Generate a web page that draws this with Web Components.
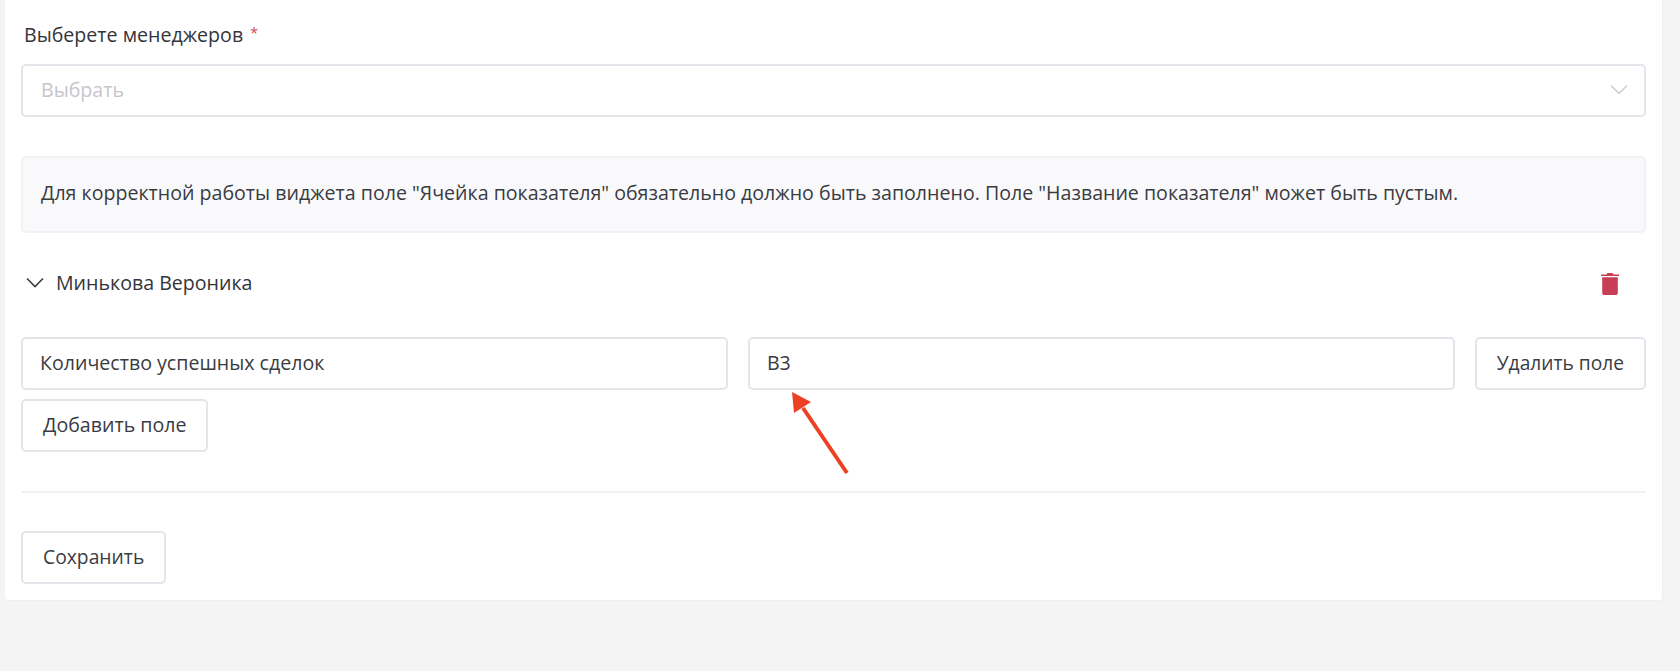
<!DOCTYPE html>
<html lang="ru">
<head>
<meta charset="utf-8">
<title>Виджет</title>
<style>
    html, body { margin: 0; height: 100%; }
    body {
        background-color: #f4f4f5;
        color: #3a3c42;
        font-family: "Open Sans", "Noto Sans", sans-serif;
        font-size: 19.6px;
        overflow: hidden;
    }
</style>
</head>
<body>
<settings-card>
    <form-label>Выберете менеджеров</form-label>
    <select-box placeholder="Выбрать"></select-box>
    <info-note>Для корректной работы виджета поле "Ячейка показателя" обязательно должно быть заполнено. Поле "Название показателя" может быть пустым.</info-note>
    <manager-row>Минькова Вероника</manager-row>
    <field-row first="Количество успешных сделок" second="B3"></field-row>
    <plain-button class="add">Добавить поле</plain-button>
    <card-divider></card-divider>
    <plain-button style="font-size: 19.3px">Сохранить</plain-button>
    <red-arrow></red-arrow>
</settings-card>

<script>
const BORDER = '#e4e4ea';

class SettingsCard extends HTMLElement {
    constructor() {
        super();
        this.attachShadow({ mode: 'open' }).innerHTML = `
            <style>
                :host {
                    display: block;
                    position: relative;
                    box-sizing: border-box;
                    width: 1658px;
                    margin-left: 5px;
                    height: 601px;
                    padding: 20px 16px 0;
                    background: #fff;
                    border-bottom: 1px solid #eeeef1;
                    border-right: 1px solid #eeeef1;
                    border-radius: 0 0 4px 4px;
                }
            </style>
            <slot></slot>
        `;
    }
}

class FormLabel extends HTMLElement {
    constructor() {
        super();
        this.attachShadow({ mode: 'open' }).innerHTML = `
            <style>
                :host { display: block; height: 44px; line-height: 30px; padding-left: 3px; box-sizing: border-box; color: #33353a; }
                span { color: #d0455c; font-size: 14px; position: relative; top: -4px; margin-left: 2px; }
            </style>
            <slot></slot> <span>*</span>
        `;
    }
}

class SelectBox extends HTMLElement {
    constructor() {
        super();
        this.attachShadow({ mode: 'open' }).innerHTML = `
            <style>
                :host {
                    display: flex;
                    align-items: center;
                    justify-content: space-between;
                    box-sizing: border-box;
                    height: 53px;
                    margin-bottom: 39px;
                    padding: 0 16px 2px 18px;
                    border: 2px solid ${BORDER};
                    border-radius: 5px;
                    color: #c6c7cb;
                }
                svg { display: block; }
            </style>
            <span>${this.getAttribute('placeholder')}</span>
            <svg width="18" height="11" viewBox="0 0 18 11"><path d="M1 1.5 9 9.5 17 1.5" fill="none" stroke="#cbccd0" stroke-width="1.5"/></svg>
        `;
    }
}

class InfoNote extends HTMLElement {
    constructor() {
        super();
        this.attachShadow({ mode: 'open' }).innerHTML = `
            <style>
                :host {
                    display: flex;
                    align-items: center;
                    box-sizing: border-box;
                    height: 77px;
                    padding: 0 18px 5px;
                    background: #f9f9fb;
                    border: 2px solid #f2f2f5;
                    border-radius: 5px;
                    color: #3a3c42;
                    white-space: nowrap;
                }
            </style>
            <slot></slot>
        `;
    }
}

class ManagerRow extends HTMLElement {
    constructor() {
        super();
        this.attachShadow({ mode: 'open' }).innerHTML = `
            <style>
                :host {
                    display: flex;
                    align-items: center;
                    box-sizing: border-box;
                    height: 104px;
                    padding: 0 27px 6px 5px;
                    color: #33353a;
                }
                .chev { margin-right: 12px; display: block; }
                .name { flex: 1; }
                .trash { display: block; margin-top: 4px; }
            </style>
            <svg class="chev" width="18" height="11" viewBox="0 0 18 11"><path d="M1 1.5 9 9.5 17 1.5" fill="none" stroke="#3a3c42" stroke-width="1.6"/></svg>
            <span class="name"><slot></slot></span>
            <svg class="trash" width="18" height="22" viewBox="0 0 18 23" preserveAspectRatio="none"><path fill="#c73f55" d="M6.5 0h5l1 1.5H18V3.2H0V1.5h5.5zM1.2 4.5h15.6v16.3c0 1.2-.9 2.2-2.1 2.2H3.3c-1.2 0-2.1-1-2.1-2.2z"/></svg>
        `;
    }
}

class FieldRow extends HTMLElement {
    constructor() {
        super();
        this.attachShadow({ mode: 'open' }).innerHTML = `
            <style>
                :host { display: flex; gap: 20px; margin-bottom: 9px; }
                .input {
                    flex: 1;
                    box-sizing: border-box;
                    height: 53px;
                    display: flex;
                    align-items: center;
                    padding: 0 17px 2px;
                    border: 2px solid ${BORDER};
                    border-radius: 5px;
                    color: #3a3c42;
                }
                plain-button { font-size: 19.2px; }
            </style>
            <div class="input">${this.getAttribute('first')}</div>
            <div class="input">${this.getAttribute('second')}</div>
            <plain-button>Удалить поле</plain-button>
        `;
    }
}

class PlainButton extends HTMLElement {
    constructor() {
        super();
        this.attachShadow({ mode: 'open' }).innerHTML = `
            <style>
                :host {
                    display: inline-flex;
                    align-items: center;
                    box-sizing: border-box;
                    height: 53px;
                    padding: 0 20px 2px;
                    background: #fff;
                    border: 2px solid ${BORDER};
                    border-radius: 5px;
                    color: #3a3c42;
                    white-space: nowrap;
                    vertical-align: top;
                }
            </style>
            <slot></slot>
        `;
    }
}

class CardDivider extends HTMLElement {
    constructor() {
        super();
        this.attachShadow({ mode: 'open' }).innerHTML = `
            <style>
                :host { display: block; height: 2px; background: #f1f1f4; margin: 39px 0 38px; }
            </style>
        `;
    }
}

// arrow drawn over the form, part of the annotated screenshot
class RedArrow extends HTMLElement {
    constructor() {
        super();
        this.attachShadow({ mode: 'open' }).innerHTML = `
            <style>
                :host { position: absolute; left: 782px; top: 388px; display: block; }
                svg { display: block; }
            </style>
            <svg width="70" height="90" viewBox="0 0 70 90">
                <path d="M60 85 16 20" stroke="#ee4023" stroke-width="4" fill="none"/>
                <path fill="#ee4023" d="M5 4 24 14 7 25z"/>
            </svg>
        `;
    }
}

customElements.define('plain-button', PlainButton);
customElements.define('settings-card', SettingsCard);
customElements.define('form-label', FormLabel);
customElements.define('select-box', SelectBox);
customElements.define('info-note', InfoNote);
customElements.define('manager-row', ManagerRow);
customElements.define('field-row', FieldRow);
customElements.define('card-divider', CardDivider);
customElements.define('red-arrow', RedArrow);
</script>
</body>
</html>
